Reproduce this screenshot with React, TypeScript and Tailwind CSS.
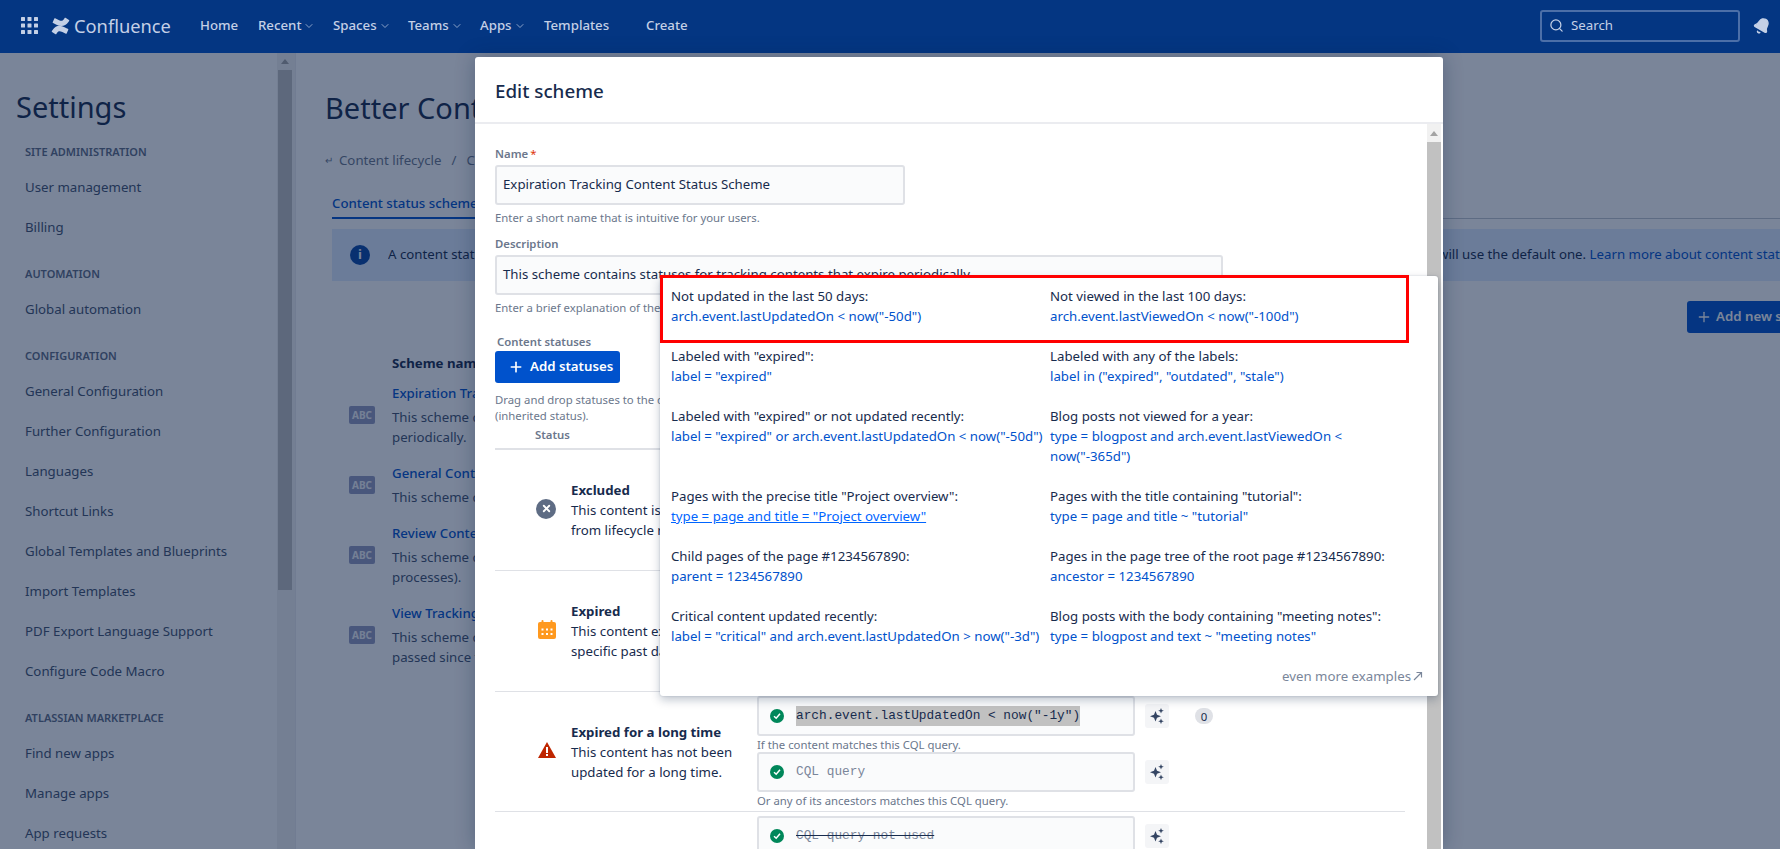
import React from 'react';
import { ChevronDown, Search, Bell, Plus, X } from 'lucide-react';

type NavGroup = { title: string; items: string[] };

const navGroups: NavGroup[] = [
  { title: 'Site administration', items: ['User management', 'Billing'] },
  { title: 'Automation', items: ['Global automation'] },
  {
    title: 'Configuration',
    items: [
      'General Configuration',
      'Further Configuration',
      'Languages',
      'Shortcut Links',
      'Global Templates and Blueprints',
      'Import Templates',
      'PDF Export Language Support',
      'Configure Code Macro',
    ],
  },
  { title: 'Atlassian Marketplace', items: ['Find new apps', 'Manage apps', 'App requests'] },
];

const schemes = [
  { name: 'Expiration Tracking Content Status Scheme', lines: ['This scheme contains statuses for tracking contents that expire', 'periodically.'], h: 'h-[80px]' },
  { name: 'General Content Status Scheme', lines: ['This scheme contains general statuses.'], h: 'h-[60px]' },
  { name: 'Review Content Status Scheme', lines: ['This scheme contains statuses for review workflows (approval', 'processes).'], h: 'h-[80px]' },
  { name: 'View Tracking Content Status Scheme', lines: ['This scheme contains statuses for time', 'passed since the last view.'], h: 'h-[80px]' },
];

const examples: { label: string; query: string[]; hover?: boolean }[] = [
  { label: 'Labeled with "expired":', query: ['label = "expired"'] },
  { label: 'Labeled with any of the labels:', query: ['label in ("expired", "outdated", "stale")'] },
  { label: 'Labeled with "expired" or not updated recently:', query: ['label = "expired" or arch.event.lastUpdatedOn < now("-50d")'] },
  { label: 'Blog posts not viewed for a year:', query: ['type = blogpost and arch.event.lastViewedOn <', 'now("-365d")'] },
  { label: 'Pages with the precise title "Project overview":', query: ['type = page and title = "Project overview"'], hover: true },
  { label: 'Pages with the title containing "tutorial":', query: ['type = page and title ~ "tutorial"'] },
  { label: 'Child pages of the page #1234567890:', query: ['parent = 1234567890'] },
  { label: 'Pages in the page tree of the root page #1234567890:', query: ['ancestor = 1234567890'] },
  { label: 'Critical content updated recently:', query: ['label = "critical" and arch.event.lastUpdatedOn > now("-3d")'] },
  { label: 'Blog posts with the body containing "meeting notes":', query: ['type = blogpost and text ~ "meeting notes"'] },
];

function GridIcon() {
  return (
    <svg width="17" height="17" viewBox="0 0 17 17" fill="#c4d0e6">
      {[0, 6.5, 13].map((y) =>
        [0, 6.5, 13].map((x) => <rect key={`${x}-${y}`} x={x} y={y} width="4" height="4" rx="0.6" />),
      )}
    </svg>
  );
}

function ConfluenceLogo() {
  return (
    <svg width="19" height="18" viewBox="0 0 24 24" fill="#c4d0e6">
      <path d="M1.2 17.6c-.3.4-.6 1-.8 1.4-.2.4-.1.9.3 1.1l4.6 2.8c.4.3.9.1 1.2-.3.2-.3.5-.8.8-1.4 1.9-3.1 3.8-2.7 7.2-1.1l4.6 2.2c.4.2.9 0 1.1-.4l2.2-4.9c.2-.4 0-.9-.4-1.1-1-.5-2.9-1.4-4.6-2.2C11.7 10.600 5.700 10.800 1.200 17.600z" />
      <path d="M22.800 6.400c.3-.4.6-1 .8-1.400.2-.4.1-.9-.3-1.100L18.700 1.100c-.4-.3-.9-.1-1.200.3-.2.3-.5.8-.8 1.400-1.900 3.100-3.800 2.700-7.200 1.100L4.900 1.700c-.4-.2-.9 0-1.100.4L1.600 7c-.2.4 0 .9.4 1.100 1 .5 2.900 1.400 4.600 2.200 5.700 2.800 11.700 2.600 16.200-3.900z" />
    </svg>
  );
}

function SparkleIcon() {
  return (
    <svg width="14" height="16" viewBox="0 0 14 16" fill="#344563">
      <path d="M5.500 3 7 6.800 11 8.200 7 9.700 5.500 13.500 4 9.700 0 8.200 4 6.800z" />
      <path d="M11 0l.8 2 2 .8-2 .8-.8 2-.8-2-2-.8 2-.8z" />
      <path d="M11 10.500l.8 2 2 .8-2 .8-.8 2-.8-2-2-.8 2-.8z" />
    </svg>
  );
}

function CalendarIcon() {
  return (
    <svg width="18" height="19" viewBox="0 0 18 19">
      <rect x="0" y="2" width="18" height="17" rx="2" fill="#ff991f" />
      <rect x="3.500" y="0" width="2" height="4" rx="1" fill="#ff991f" />
      <rect x="12.500" y="0" width="2" height="4" rx="1" fill="#ff991f" />
      {[8.500, 13].map((y) =>
        [3.500, 8, 12.500].map((x) => <rect key={`${x}-${y}`} x={x} y={y} width="2" height="2" fill="#fff" />),
      )}
    </svg>
  );
}

function WarningIcon() {
  return (
    <svg width="18" height="16" viewBox="0 0 18 16">
      <path d="M9 0 18 16H0z" fill="#bf2600" />
      <rect x="8" y="5" width="2" height="6" fill="#fff" />
      <rect x="8" y="12" width="2" height="2" fill="#fff" />
    </svg>
  );
}

function CheckBadge() {
  return (
    <span className="flex h-[14px] w-[14px] shrink-0 items-center justify-center rounded-full bg-[#00875a]">
      <svg width="8" height="8" viewBox="0 0 8 8" fill="none" stroke="#fff" strokeWidth="1.500">
        <path d="M1 4.200 3.200 6.200 7 1.800" />
      </svg>
    </span>
  );
}

function CqlField({ value, placeholder, strike, selected }: { value?: string; placeholder?: string; strike?: boolean; selected?: boolean }) {
  return (
    <div className="flex items-start gap-[10px]">
      <div className="flex h-[40px] w-[378px] shrink-0 items-center gap-[12px] rounded-[3px] border-2 border-[#dfe1e6] bg-[#fafbfc] pl-[11px]">
        <CheckBadge />
        {value ? (
          <span className={`font-['Liberation_Mono',monospace] text-[12.800px] text-[#172b4d] ${selected ? 'bg-[#c1c1c1]' : ''}`}>{value}</span>
        ) : (
          <span className={`font-['Liberation_Mono',monospace] text-[12.800px] text-[#7a869a] ${strike ? 'line-through decoration-[#172b4d]' : ''}`}>{placeholder}</span>
        )}
      </div>
      <span className="mt-[8px] flex h-[24px] w-[24px] items-center justify-center rounded-[3px] bg-[#f4f5f7]">
        <SparkleIcon />
      </span>
    </div>
  );
}

function Sidebar() {
  return (
    <aside className="relative flex w-[296px] shrink-0 border-r border-[#ebecf0] bg-white">
      <div className="flex-1">
        <h2 className="pl-4 pt-[32px] text-[29px] leading-[44px] text-[#172b4d]">Settings</h2>
        <div className="mt-[-3.700px] pl-[25px]">
          {navGroups.map((group) => (
            <div key={group.title} className="pt-[16.700px]">
              <div className="flex h-[20px] items-center text-[11px] font-semibold uppercase text-[#5e6c84]">{group.title}</div>
              <ul className="mt-[5.500px]">
                {group.items.map((item) => (
                  <li key={item} className="flex h-[40px] items-center text-[13.250px] text-[#42526e]">{item}</li>
                ))}
              </ul>
            </div>
          ))}
        </div>
      </div>
      <div className="flex w-[18px] flex-col items-center bg-[#f1f1f1] pr-[3px]">
        <div className="flex h-[17px] items-center">
          <span className="h-0 w-0 border-x-[4px] border-b-[5px] border-x-transparent border-b-[#a3a3a3]" />
        </div>
        <div className="h-[520px] w-[14px] bg-[#c1c1c1]" />
      </div>
    </aside>
  );
}

function MainContent() {
  return (
    <main className="min-w-0 flex-1 overflow-hidden bg-white">
      <h1 className="whitespace-nowrap pl-[29px] pt-[33px] text-[29px] leading-[44px] text-[#172b4d]">Better Content Archiving</h1>
      <div className="mt-[20px] flex items-center gap-[6px] pl-[29px] text-[13.250px] leading-[20px] text-[#6b778c]">
        <span className="text-[10px]">↵</span>
        <span>Content lifecycle</span>
        <span className="mx-[4px]">/</span>
        <span>Content status schemes</span>
      </div>
      <div className="ml-[36px] mt-[23px] flex h-[26px] border-b border-[#c1c7d0]">
        <span className="h-[26px] border-b-2 border-[#0052cc] text-[13.250px] font-medium leading-[20px] text-[#0052cc]">Content status schemes</span>
      </div>
      <div className="ml-[36px] mt-[10px] flex h-[52px] items-center whitespace-nowrap bg-[#deebff] pl-[18px] text-[13.250px] text-[#172b4d]">
        <span className="mr-[18px] flex h-[20px] w-[20px] shrink-0 items-center justify-center rounded-full bg-[#0747a6] text-[13px] font-bold text-white">i</span>
        <span className="w-[1050px] shrink-0 overflow-hidden">A content status scheme is a set of statuses that can be applied to spaces. If a space has no scheme, it</span>
        <span>will use the default one.&nbsp;<span className="text-[#0052cc]">Learn more about content status schemes</span></span>
      </div>
      <div className="mt-[20px] pl-[1391px]">
        <button type="button" className="flex h-[32px] w-[160px] items-center gap-[4px] whitespace-nowrap rounded-[3px] bg-[#0052cc] pl-[9px] text-[13.250px] font-semibold text-white">
          <Plus size={16} />
          Add new scheme
        </button>
      </div>
      <div className="ml-[96px] mt-[20px] h-[20px] text-[13.250px] font-bold leading-[20px] text-[#172b4d]">Scheme name</div>
      <div className="ml-[53px] mt-[2px]">
        {schemes.map((s) => (
          <div key={s.name} className={`flex items-center ${s.h}`}>
            <span className="mr-[17px] flex h-[18px] w-[26px] shrink-0 items-center justify-center rounded-[2px] bg-[#949cc1] text-[10px] font-bold text-[#f4f5f7]">ABC</span>
            <div className="whitespace-nowrap text-[13.250px] leading-[20px]">
              <div className="mb-[4px] font-medium text-[#0052cc]">{s.name}</div>
              {s.lines.map((l) => (
                <div key={l} className="text-[#42526e]">{l}</div>
              ))}
            </div>
          </div>
        ))}
      </div>
    </main>
  );
}

function StatusRow({ icon, title, lines, h, children }: { icon: React.ReactNode; title: string; lines: string; h: string; children?: React.ReactNode }) {
  return (
    <div className={`flex border-b border-[#dfe1e6] ${h}`}>
      <div className="flex w-[76px] shrink-0 items-center justify-end pb-[3px] pr-[15px]">{icon}</div>
      <div className="flex w-[186px] shrink-0 flex-col justify-center text-[13.250px] leading-[20px] text-[#172b4d]">
        <div className="font-bold">{title}</div>
        <div className="w-[176px]">{lines}</div>
      </div>
      <div className="min-w-0 flex-1 pt-[4px]">{children}</div>
    </div>
  );
}

function ExamplesPopup() {
  return (
    <div className="absolute left-[185px] top-[219px] z-10 w-[778px] rounded-[3px] bg-white pb-[9px] pl-[11px] pt-[10px] text-[13.250px] leading-[20px] text-[#172b4d] shadow-[0_4px_10px_rgba(9,30,66,0.25),0_0_2px_rgba(9,30,66,0.2)]">
      <div className="grid grid-cols-[379px_379px] gap-y-[20px]">
        <div>
          <div>Not updated in the last 50 days:</div>
          <div className="text-[#0052cc]">arch.event.lastUpdatedOn &lt; now("-50d")</div>
        </div>
        <div>
          <div>Not viewed in the last 100 days:</div>
          <div className="text-[#0052cc]">arch.event.lastViewedOn &lt; now("-100d")</div>
        </div>
        {examples.map((ex) => (
          <div key={ex.label} className="whitespace-nowrap">
            <div>{ex.label}</div>
            {ex.query.map((q) => (
              <div key={q} className={ex.hover ? 'text-[#0065ff] underline' : 'text-[#0052cc]'}>{q}</div>
            ))}
          </div>
        ))}
      </div>
      <div className="mt-[20px] flex items-center justify-end gap-[2px] pb-[1px] pr-[15px] text-[#7a869a]">
        even more examples
        <svg width="10" height="10" viewBox="0 0 10 10" fill="none" stroke="#7a869a" strokeWidth="1.200">
          <path d="M1 9 8.500 1.500M3.500 1.500h5v5" />
        </svg>
      </div>
      {/* red annotation from the screenshot */}
      <div className="absolute left-0 top-[-1px] h-[68px] w-[749px] border-[3px] border-[#ff0000]" />
    </div>
  );
}

function EditSchemeModal() {
  return (
    <div className="absolute left-[475px] top-[57px] z-30 flex h-[792px] w-[968px] flex-col rounded-t-[3px] bg-white shadow-[0_0_20px_rgba(9,30,66,0.3)]">
      <div className="flex h-[67px] shrink-0 items-center border-b-2 border-[#ebecf0] pl-[20px] pt-[4px] text-[18.800px] font-medium text-[#172b4d]">Edit scheme</div>
      <div className="relative flex min-h-0 flex-1">
        <div className="min-w-0 flex-1 overflow-hidden pl-[20px] pt-[22px]">
          <div className="h-[16px] text-[11.350px] font-semibold leading-[16px] text-[#6b778c]">
            Name<span className="ml-[2px] font-normal text-[#de350b]">*</span>
          </div>
          <div className="mt-[3px] flex h-[40px] w-[410px] items-center rounded-[3px] border-2 border-[#dfe1e6] bg-[#fafbfc] pl-[6px] text-[13.250px] text-[#172b4d]">Expiration Tracking Content Status Scheme</div>
          <div className="mt-[5px] h-[16px] text-[11.350px] leading-[16px] text-[#6b778c]">Enter a short name that is intuitive for your users.</div>
          <div className="mt-[10px] h-[16px] text-[11.350px] font-semibold leading-[16px] text-[#6b778c]">Description</div>
          <div className="mt-[3px] flex h-[40px] w-[728px] items-center rounded-[3px] border-2 border-[#dfe1e6] bg-[#fafbfc] pl-[6px] text-[13.250px] text-[#172b4d]">This scheme contains statuses for tracking contents that expire periodically.</div>
          <div className="mt-[5px] h-[16px] text-[11.350px] leading-[16px] text-[#6b778c]">Enter a brief explanation of the scheme.</div>
          <div className="ml-[2px] mt-[18px] h-[16px] text-[11.350px] font-semibold leading-[16px] text-[#6b778c]">Content statuses</div>
          <button type="button" className="mt-[1px] flex h-[32px] w-[125px] items-center gap-[6px] rounded-[3px] bg-[#0052cc] pl-[13px] text-[13.250px] font-semibold text-white">
            <Plus size={16} strokeWidth={2.500} />
            Add statuses
          </button>
          <div className="mt-[9px] text-[11.350px] leading-[16px] text-[#6b778c]">
            Drag and drop statuses to the desired position.<br />(inherited status).
          </div>
          <div className="w-[910px]">
            <div className="flex h-[26px] items-center border-b-2 border-[#dfe1e6] pb-[2px] pl-[40px] text-[11.350px] font-semibold text-[#6b778c]">Status</div>
            <StatusRow
              h="h-[121px]"
              title="Excluded"
              lines="This content is excluded from lifecycle rules."
              icon={
                <span className="flex h-[20px] w-[20px] items-center justify-center rounded-full bg-[#5e6c84]">
                  <X size={11} color="#fff" strokeWidth={4} />
                </span>
              }
            />
            <StatusRow h="h-[121px]" title="Expired" lines="This content expired on a specific past date." icon={<CalendarIcon />} />
            <StatusRow h="h-[120px]" title="Expired for a long time" lines="This content has not been updated for a long time." icon={<WarningIcon />}>
              <div className="relative">
                <CqlField value={'arch.event.lastUpdatedOn < now("-1y")'} selected />
                <span className="absolute left-[438px] top-[12px] flex h-[16px] w-[18px] items-center justify-center rounded-full bg-[#dfe1e6] text-[11.350px] text-[#172b4d]">0</span>
              </div>
              <div className="mt-[1px] h-[15px] text-[11.350px] leading-[16px] text-[#6b778c]">If the content matches this CQL query.</div>
              <CqlField placeholder="CQL query" />
              <div className="mt-[1px] text-[11.350px] leading-[16px] text-[#6b778c]">Or any of its ancestors matches this CQL query.</div>
            </StatusRow>
            <div className="flex">
              <div className="w-[262px] shrink-0" />
              <div className="pt-[4px]">
                <CqlField placeholder="CQL query not used" strike />
              </div>
            </div>
          </div>
        </div>
        <div className="flex w-[16px] shrink-0 flex-col bg-white pr-[2px]">
          <div className="flex h-[18px] items-center justify-center bg-[#f1f1f1]">
            <span className="h-0 w-0 border-x-[4px] border-b-[5px] border-x-transparent border-b-[#a3a3a3]" />
          </div>
          <div className="flex-1 bg-[#c1c1c1]" />
        </div>
      </div>
      <ExamplesPopup />
    </div>
  );
}

function TopBar() {
  const nav = [
    { label: 'Recent', w: 'w-[75px]' },
    { label: 'Spaces', w: 'w-[75px]' },
    { label: 'Teams', w: 'w-[72px]' },
    { label: 'Apps', w: 'w-[64px]' },
  ];
  return (
    <header className="relative z-20 flex h-[53px] shrink-0 items-center bg-[#043682] pb-[2px] text-[13.250px] font-medium text-[#c4d0e6]">
      <span className="ml-[21px] flex"><GridIcon /></span>
      <span className="ml-[13px] flex"><ConfluenceLogo /></span>
      <span className="ml-[4px] w-[126px] text-[18.300px] font-normal">Confluence</span>
      <span className="w-[58px]">Home</span>
      {nav.map((n) => (
        <span key={n.label} className={`flex items-center ${n.w}`}>
          {n.label}
          <ChevronDown size={12} className="ml-[2px] opacity-70" />
        </span>
      ))}
      <span className="w-[102px]">Templates</span>
      <span>Create</span>
      <div className="ml-auto flex h-[32px] w-[200px] items-center rounded-[3px] border-2 border-[#4c6fa8] pl-[7px] font-normal">
        <Search size={15} />
        <span className="ml-[7px]">Search</span>
      </div>
      <Bell size={18} fill="#c4d0e6" className="ml-[13px] mr-[9px] rotate-[30deg]" />
    </header>
  );
}

export default function App() {
  return (
    <div className="relative flex h-[849px] w-[1780px] flex-col overflow-hidden bg-white font-['Noto_Sans',sans-serif]">
      <TopBar />
      <div className="flex min-h-0 flex-1">
        <Sidebar />
        <MainContent />
      </div>
      <div className="absolute inset-x-0 bottom-0 top-[53px] z-10 bg-[rgba(9,30,66,0.54)]" />
      <EditSchemeModal />
    </div>
  );
}
